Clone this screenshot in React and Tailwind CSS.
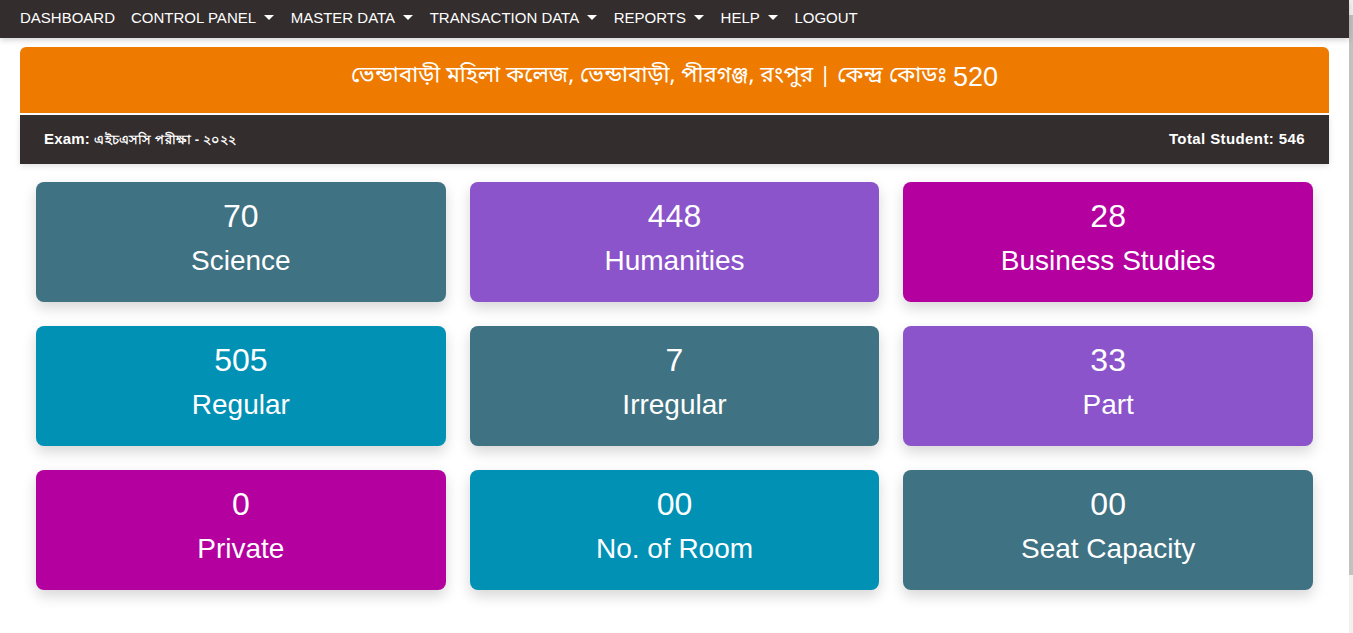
import React from "react";

const navItems = [
  { label: "DASHBOARD", caret: false },
  { label: "CONTROL PANEL", caret: true },
  { label: "MASTER DATA", caret: true },
  { label: "TRANSACTION DATA", caret: true },
  { label: "REPORTS", caret: true },
  { label: "HELP", caret: true },
  { label: "LOGOUT", caret: false },
];

const cards = [
  { n: "70", label: "Science", bg: "bg-[#3f7282]" },
  { n: "448", label: "Humanities", bg: "bg-[#8b54ca]" },
  { n: "28", label: "Business Studies", bg: "bg-[#b4009f]" },
  { n: "505", label: "Regular", bg: "bg-[#0091b5]" },
  { n: "7", label: "Irregular", bg: "bg-[#3f7282]" },
  { n: "33", label: "Part", bg: "bg-[#8b54ca]" },
  { n: "0", label: "Private", bg: "bg-[#b4009f]" },
  { n: "00", label: "No. of Room", bg: "bg-[#0091b5]" },
  { n: "00", label: "Seat Capacity", bg: "bg-[#3f7282]" },
];

export default function App() {
  return (
    <div className="min-h-[633px] bg-white font-['Liberation_Sans',Arial,sans-serif] text-white pr-[4px] relative">
      <nav className="h-[38px] bg-[#332d2d] flex items-center px-[12px] pb-[3px] shadow-[0_2px_6px_rgba(0,0,0,0.18)] relative z-10">
        {navItems.map((it) => (
          <div key={it.label} className="flex items-center px-[8px] text-[15px] leading-none">
            <span>{it.label}</span>
            {it.caret && (
              <span className="ml-[8px] mr-[0.6px] inline-block w-0 h-0 border-l-[5px] border-r-[5px] border-t-[5px] border-l-transparent border-r-transparent border-t-white" />
            )}
          </div>
        ))}
      </nav>

      <div className="mx-[20px] mt-[9px]">
        <div className="h-[66px] bg-[#ee7b00] rounded-t-[6px] flex items-center justify-center pb-[6px]">
          <span className="text-[22.5px] font-['Noto_Sans_Bengali','Lohit_Bengali','Liberation_Sans',sans-serif]">
            ভেন্ডাবাড়ী মহিলা কলেজ, ভেন্ডাবাড়ী, পীরগঞ্জ, রংপুর | কেন্দ্র কোডঃ
          </span>
          <span className="text-[27px] ml-[6px]">520</span>
        </div>
        <div className="h-[2px] bg-white" />
        <div className="h-[49px] bg-[#332d2d] flex items-center justify-between px-[24px] text-[15px] font-bold shadow-[0_2px_6px_rgba(0,0,0,0.12)]">
          <span className="tracking-[0.2px]">Exam: <span className="text-[13px]">এইচএসসি পরীক্ষা - ২০২২</span></span>
          <span className="tracking-[0.4px]">Total Student: 546</span>
        </div>

        <div className="grid grid-cols-3 gap-[24px] px-[16px] pt-[18px] pb-[24px]">
          {cards.map((c, i) => (
            <div
              key={i}
              className={`${c.bg} h-[120px] rounded-[8px] shadow-[0_6px_14px_rgba(0,0,0,0.16)] flex flex-col items-center pt-[18px]`}
            >
              <div className="text-[32px] leading-none">{c.n}</div>
              <div className="text-[28px] leading-none mt-[15px]">{c.label}</div>
            </div>
          ))}
        </div>
      </div>

      <div className="absolute top-0 right-0 w-[4px] h-[633px] bg-[#f1f1f1]">
        <div className="mt-[15px] h-[560px] bg-[#c1c1c1]" />
      </div>
    </div>
  );
}
